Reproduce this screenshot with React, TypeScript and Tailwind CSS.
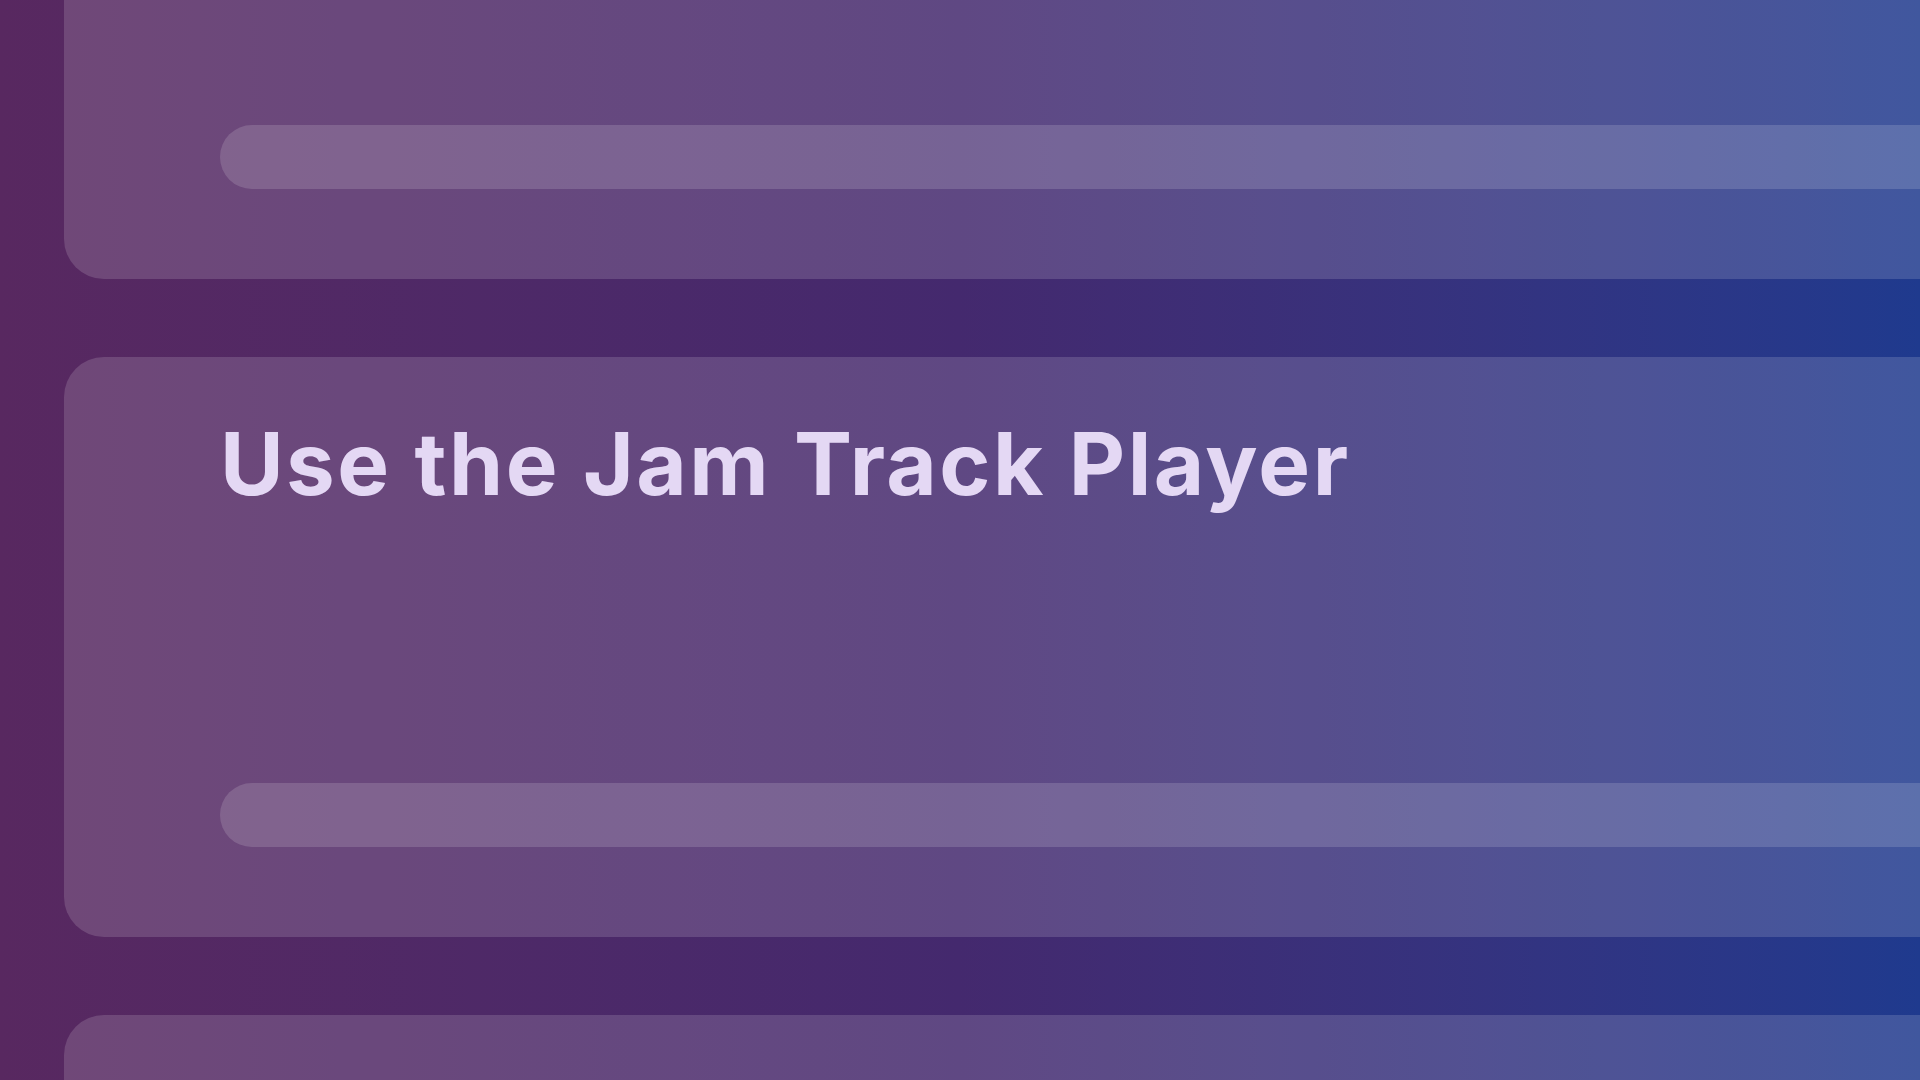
import React from "react";

type Step = {
  title?: string;
};

const steps: Step[] = [{}, { title: "Use the Jam Track Player" }, {}];

function StepCard({ title }: Step) {
  return (
    <div className="h-[580px] shrink-0 rounded-[40px] bg-white/15 -mr-24 pl-[156px] pt-[63px] pb-[90px] flex flex-col justify-between">
      <h2 className="text-[87px] leading-none font-bold tracking-[0.028em] text-[#e4d8f4]">
        {title ?? "\u00a0"}
      </h2>
      <div className="h-16 rounded-full bg-white/15" />
    </div>
  );
}

export default function App() {
  return (
    <div
      className="h-screen w-full overflow-hidden bg-linear-to-r from-[#582860] via-[#44296e] to-[#1f3a8e]"
      style={{ fontFamily: "Inter, 'Noto Sans', sans-serif" }}
    >
      <div className="pl-16 -mt-[301px] flex flex-col gap-[78px]">
        {steps.map((s, i) => (
          <StepCard key={i} title={s.title} />
        ))}
      </div>
    </div>
  );
}
